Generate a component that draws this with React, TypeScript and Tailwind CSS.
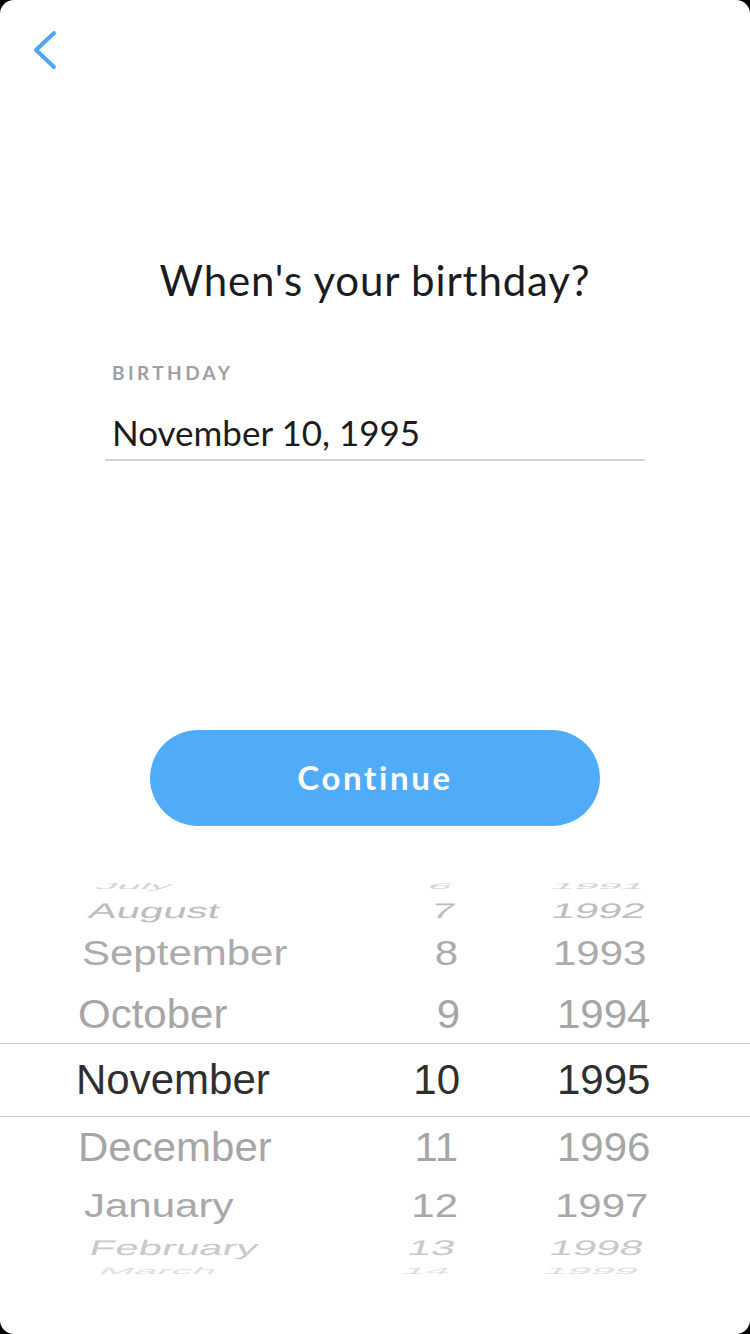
import React from 'react';

interface PickerRow {
  month: string;
  day: string;
  year: string;
  rowClass: string;
  innerClass: string;
  monthClass: string;
  dayClass: string;
  yearClass: string;
}

const rows: PickerRow[] = [
  { month: 'July', day: '6', year: '1991', rowClass: 'h-[24px] text-[#d4d4d4]', innerClass: 'scale-y-[0.2] -skew-x-[12deg]', monthClass: 'pl-[97px]', dayClass: 'pr-[8px]', yearClass: 'pl-[92px]' },
  { month: 'August', day: '7', year: '1992', rowClass: 'h-[26px] text-[#bdbdbd]', innerClass: 'scale-y-[0.5] -skew-x-[8deg]', monthClass: 'pl-[89px]', dayClass: 'pr-[5px]', yearClass: 'pl-[92px]' },
  { month: 'September', day: '8', year: '1993', rowClass: 'h-[60px] text-[#ababab]', innerClass: 'scale-y-[0.82]', monthClass: 'pl-[82px]', dayClass: 'pr-[2px]', yearClass: 'pl-[93px]' },
  { month: 'October', day: '9', year: '1994', rowClass: 'h-[59px] text-[#a6a6a6]', innerClass: 'scale-y-[0.97]', monthClass: 'pl-[78px]', dayClass: 'pr-0', yearClass: 'pl-[97px]' },
];

const lowerRows: PickerRow[] = [
  { month: 'December', day: '11', year: '1996', rowClass: 'h-[62px] text-[#a6a6a6]', innerClass: 'scale-y-[0.95]', monthClass: 'pl-[78px]', dayClass: 'pr-[2px]', yearClass: 'pl-[97px]' },
  { month: 'January', day: '12', year: '1997', rowClass: 'h-[54px] text-[#a9a9a9]', innerClass: 'scale-y-[0.78]', monthClass: 'pl-[84px]', dayClass: 'pr-[2px]', yearClass: 'pl-[95px]' },
  { month: 'February', day: '13', year: '1998', rowClass: 'h-[30px] text-[#c9c9c9]', innerClass: 'scale-y-[0.5] -skew-x-[8deg]', monthClass: 'pl-[90px]', dayClass: 'pr-[5px]', yearClass: 'pl-[90px]' },
  { month: 'March', day: '14', year: '1999', rowClass: 'h-[16px] text-[#e0e0e0]', innerClass: 'scale-y-[0.22] -skew-x-[12deg]', monthClass: 'pl-[100px]', dayClass: 'pr-[10px]', yearClass: 'pl-[85px]' },
];

const Row = ({ r }: { r: PickerRow }) => (
  <div className={`flex items-center overflow-visible ${r.rowClass}`}>
    <div className={`flex w-full items-center leading-none ${r.innerClass}`}>
      <span className={`w-[360px] shrink-0 ${r.monthClass}`}>{r.month}</span>
      <span className={`w-[100px] shrink-0 text-right ${r.dayClass}`}>{r.day}</span>
      <span className={r.yearClass}>{r.year}</span>
    </div>
  </div>
);

export default function App() {
  return (
    <div className="min-h-screen bg-black">
      <div className="w-[750px] h-[1334px] bg-white rounded-[14px] overflow-hidden flex flex-col font-['Lato','Noto_Sans',sans-serif]">
        {/* back */}
        <div className="h-[100px] pl-[32px] pt-[30px]">
          <svg width="26" height="40" viewBox="0 0 26 40" fill="none">
            <path d="M22 3 L4 20 L22 37" stroke="#4ca6f5" strokeWidth="4" strokeLinecap="round" strokeLinejoin="round" />
          </svg>
        </div>

        <h1 className="mt-[155px] text-center text-[42px] leading-[50px] tracking-[0.02em] text-[#1c1c1e]">When's your birthday?</h1>

        <div className="mt-[56px] pl-[112px] text-[19px] leading-[24px] font-bold tracking-[0.18em] text-[#9ba0a7]">BIRTHDAY</div>

        <div className="ml-[105px] w-[540px] border-b-2 border-[#d3d3d3] pl-[7px] pb-[7px] mt-[27px]">
          <div className="text-[35px] leading-[40px] text-[#1c1c1e]">November 10, 1995</div>
        </div>

        <button className="mt-[269px] mx-auto w-[450px] h-[96px] rounded-full bg-[#50acf8] text-white text-[33px] font-bold tracking-[0.08em]">
          Continue
        </button>

        {/* picker */}
        <div className="mt-[48px] font-['Liberation_Sans',Arial,sans-serif] text-[42px]">
          {rows.map((r) => (
            <Row key={r.month} r={r} />
          ))}
          <div className="h-[74px] border-y border-[#c8c8c8] flex items-center text-[#2f2f2f]">
            <div className="flex w-full items-center leading-none">
              <span className="w-[360px] shrink-0 pl-[76px]">November</span>
              <span className="w-[100px] shrink-0 text-right">10</span>
              <span className="pl-[97px]">1995</span>
            </div>
          </div>
          {lowerRows.map((r) => (
            <Row key={r.month} r={r} />
          ))}
        </div>
      </div>
    </div>
  );
}
